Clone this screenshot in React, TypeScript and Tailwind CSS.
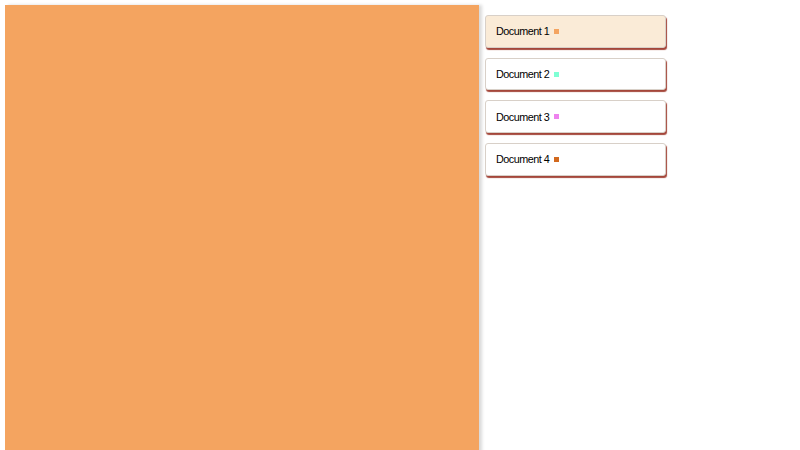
import React, { useState } from "react"

interface Doc {
  id: number
  title: string
  color: string
}

const docs: Doc[] = [
  { id: 1, title: "Document 1", color: "#f4a460" },
  { id: 2, title: "Document 2", color: "#7fffd4" },
  { id: 3, title: "Document 3", color: "#ee82ee" },
  { id: 4, title: "Document 4", color: "#d2691e" },
]

export default function App() {
  const [active, setActive] = useState(1)
  const current = docs.find((d) => d.id === active)

  return (
    <div className="flex h-[450px] w-[800px] overflow-hidden bg-white p-[5px] pb-0 font-['Liberation_Sans',Arial,sans-serif]">
      <div
        className="h-[460px] w-[474px] shrink-0 shadow-[3px_0_3px_rgba(0,0,0,0.15)]"
        style={{ backgroundColor: current?.color }}
      />
      <div className="flex flex-col gap-[10px] pl-[6px] pt-[10px]">
        {docs.map((doc) => (
          <button
            key={doc.id}
            onClick={() => setActive(doc.id)}
            className={
              "flex h-[32.7px] w-[181px] shrink-0 items-center rounded-[3px] border border-[#d8d0c8] pl-[10px] text-left text-[10.8px] text-black shadow-[1px_2px_1px_#a4463a] " +
              (doc.id === active ? "bg-[#faebd7]" : "bg-white")
            }
          >
            <span className="tracking-[-0.5px]">{doc.title}</span>
            <span className="ml-[5px] inline-block h-[5px] w-[5px]" style={{ backgroundColor: doc.color }} />
          </button>
        ))}
      </div>
    </div>
  )
}
